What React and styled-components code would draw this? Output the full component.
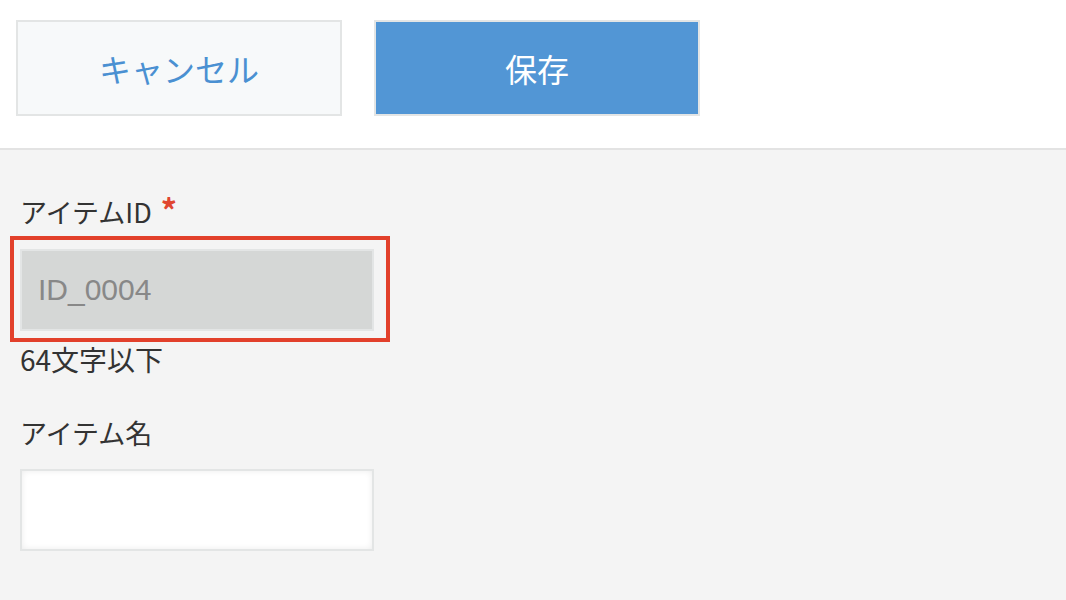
import React from "react"
import styled, { createGlobalStyle } from "styled-components"

const GlobalStyle = createGlobalStyle`
  html, body {
    margin: 0;
    padding: 0;
    background: #f4f4f4;
    font-family: "Liberation Sans", "Noto Sans CJK JP", sans-serif;
  }
`

export const Page = styled.div`
  width: 1066px;
  height: 600px;
  overflow: hidden;
  background: #f4f4f4;
`

export const Toolbar = styled.div`
  display: flex;
  gap: 32px;
  padding: 20px 16px 32px;
  background: #ffffff;
  border-bottom: 2px solid #e3e3e3;
`

export const Button = styled.button`
  width: 326px;
  height: 96px;
  box-sizing: border-box;
  border: 2px solid #e3e5e5;
  background: ${props => (props.primary ? "#5296d5" : "#f7f9fa")};
  color: ${props => (props.primary ? "#ffffff" : "#4a90d2")};
  font-family: "Noto Sans CJK JP", sans-serif;
  font-size: 32px;
  padding: 0;
  cursor: pointer;
`

export const Form = styled.div`
  display: flex;
  flex-direction: column;
  align-items: flex-start;
  padding: 41px 20px 0;
`

export const Label = styled.div`
  font-family: "Noto Sans CJK JP", sans-serif;
  font-size: 27px;
  line-height: 36px;
  color: #333333;
  margin-top: ${props => (props.spaced ? "38px" : "0")};

  span {
    color: #e0462f;
    margin-left: 9px;
    font-weight: bold;
    font-size: 32px;
  }
`

export const Field = styled.div`
  position: relative;
  margin-top: ${props => props.gap || "20px"};
`

export const Highlight = styled.div`
  position: absolute;
  left: -10px;
  top: -13px;
  width: 380px;
  height: 106px;
  box-sizing: border-box;
  border: 4px solid #e2402b;
  pointer-events: none;
`

export const Input = styled.input`
  display: block;
  width: 354px;
  height: 82px;
  box-sizing: border-box;
  border: 2px solid #e3e5e5;
  padding: 0 16px;
  font-family: "Liberation Sans", "Noto Sans CJK JP", sans-serif;
  font-size: 30px;
  color: #888888;
  background: ${props => (props.disabled ? "#d5d7d6" : "#ffffff")};
  box-shadow: ${props => (props.disabled ? "none" : "inset 0 0 6px rgba(0, 0, 0, 0.08)")};
  outline: none;
`

export const Hint = styled.div`
  font-family: "Noto Sans CJK JP", sans-serif;
  font-size: 28px;
  line-height: 36px;
  color: #333333;
  margin-top: 10px;
`

export default function App() {
  return (
    <>
      <GlobalStyle />
      <Page>
        <Toolbar>
          <Button>キャンセル</Button>
          <Button primary>保存</Button>
        </Toolbar>
        <Form>
          <Label>
            アイテムID<span>*</span>
          </Label>
          <Field gap="19px">
            <Input disabled value="ID_0004" readOnly />
            <Highlight />
          </Field>
          <Hint>64文字以下</Hint>
          <Label spaced>アイテム名</Label>
          <Field gap="18px">
            <Input />
          </Field>
        </Form>
      </Page>
    </>
  )
}
